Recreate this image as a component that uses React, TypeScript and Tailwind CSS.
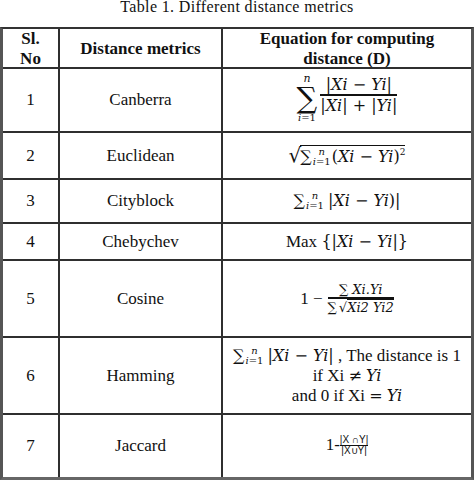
import React from "react";

const serif = "font-['Liberation_Serif','Times_New_Roman',serif]";
const mathF = "font-['DejaVu_Serif',serif]";

function V({ children }: { children: React.ReactNode }) {
  return <span className={`${mathF} italic`}>{children}</span>;
}

function Op({ children }: { children: React.ReactNode }) {
  return <span className={`${mathF} not-italic`}>{children}</span>;
}

function InlineSum() {
  return (
    <span className="inline-flex items-center">
      <span className={`${mathF} text-[16px] leading-none`}>∑</span>
      <span className={`${mathF} inline-flex flex-col text-[10px] leading-[10px] ml-[1px] italic`}>
        <span>n</span>
        <span>
          i<span className="not-italic">=1</span>
        </span>
      </span>
    </span>
  );
}

function XminusY({ close = "|", open = "|" }: { close?: string; open?: string }) {
  return (
    <span className="text-[16px]">
      <Op>{open}</Op>
      <V>Xi</V>
      <Op> − </Op>
      <V>Yi</V>
      <Op>{close}</Op>
    </span>
  );
}

const cell = `${serif} flex items-center justify-center text-center leading-[20px]`;

function Row({
  h,
  last,
  n,
  name,
  children,
  bold,
}: {
  h: string;
  last?: boolean;
  n: React.ReactNode;
  name: React.ReactNode;
  children: React.ReactNode;
  bold?: boolean;
}) {
  return (
    <div
      className={`grid grid-cols-[57px_163px_1fr] ${h} ${last ? "" : "border-b-2 border-[#2f2f2f]"} ${bold ? "font-bold" : ""}`}
    >
      <div className={`${cell} border-r-2 border-[#2f2f2f]`}>{n}</div>
      <div className={`${cell} border-r-2 border-[#2f2f2f]`}>{name}</div>
      <div className={cell}>{children}</div>
    </div>
  );
}

export default function App() {
  return (
    <div className={`w-[474px] h-[480px] bg-white text-[#111] ${serif} text-[17px] overflow-hidden`}>
      <div className="h-[27px] flex justify-center">
        <div className={`${serif} text-[16px] leading-[16px] tracking-[0.35px] -mt-[1px]`}>
          Table 1. Different distance metrics
        </div>
      </div>
      <div className="border-t-2 border-t-[#333] border-l-[3px] border-r-[3px] border-b-[3px] border-l-[#555] border-r-[#555] border-b-[#666]">
        <Row h="h-[40px]" bold n={<span>Sl.<br />No</span>} name="Distance metrics">
          <span>
            Equation for computing
            <br />
            distance (D)
          </span>
        </Row>
        <Row h="h-[64px]" n="1" name="Canberra">
          <div className="flex items-center -mt-[5px]">
            <div className="flex flex-col items-center mr-[3px]">
              <span className={`${mathF} italic text-[11px] leading-[11px]`}>n</span>
              <span className={`${mathF} text-[29px] leading-[28px]`}>∑</span>
              <span className={`${mathF} italic text-[10px] leading-[11px]`}>
                i<span className="not-italic">=1</span>
              </span>
            </div>
            <div className="flex flex-col items-center -mt-[5px]">
              <span className="leading-[19px]">
                <XminusY />
              </span>
              <span className="h-[1.5px] w-full bg-[#111]" />
              <span className="leading-[19px] text-[16px]">
                <Op>|</Op>
                <V>Xi</V>
                <Op>| + |</Op>
                <V>Yi</V>
                <Op>|</Op>
              </span>
            </div>
          </div>
        </Row>
        <Row h="h-[47px]" n="2" name="Euclidean">
          <div className="flex items-end -mt-[2px]">
            <span className={`${mathF} text-[20px] leading-[24px]`}>√</span>
            <span className="border-t-[1.5px] border-[#111] flex items-start pt-[1px] -ml-[1px]">
              <span className="flex items-center">
                <InlineSum />
                <span className="ml-[1px] text-[16px]">
                  <Op>(</Op>
                  <V>Xi</V>
                  <Op> − </Op>
                  <V>Yi</V>
                  <Op>)</Op>
                </span>
              </span>
              <span className={`${mathF} text-[9px] leading-[9px] mt-[1px]`}>2</span>
            </span>
          </div>
        </Row>
        <Row h="h-[44px]" n="3" name="Cityblock">
          <div className="flex items-center">
            <InlineSum />
            <span className="ml-[4px]">
              <XminusY close=")|" />
            </span>
          </div>
        </Row>
        <Row h="h-[37px]" n="4" name="Chebychev">
          <span>
            Max{" "}
            <span className="text-[16px]">
              <Op>{"{"}</Op>
            </span>
            <XminusY />
            <span className="text-[16px]">
              <Op>{"}"}</Op>
            </span>
          </span>
        </Row>
        <Row h="h-[77px]" n="5" name="Cosine">
          <div className="flex items-center">
            <span>1 − </span>
            <div className="flex flex-col items-center ml-[5px] text-[13px]">
              <span className="leading-[15px]">
                <Op>∑ </Op>
                <V>Xi.Yi</V>
              </span>
              <span className="h-[1.5px] w-full bg-[#111]" />
              <span className="leading-[15px] flex items-end">
                <Op>∑ </Op>
                <span className={`${mathF} ml-[2px]`}>√</span>
                <span className="border-t border-[#111]">
                  <V>Xi2 Yi2</V>
                </span>
              </span>
            </div>
          </div>
        </Row>
        <Row h="h-[77px]" n="6" name="Hamming">
          <div className="flex flex-col items-center">
            <span className="flex items-center">
              <InlineSum />
              <span className="ml-[4px]">
                <XminusY />
              </span>
              <span className="whitespace-pre"> , The distance is 1</span>
            </span>
            <span>
              if Xi{" "}
              <span className="text-[16px]">
                <Op>≠</Op> <V>Yi</V>
              </span>
            </span>
            <span>
              and 0 if Xi{" "}
              <span className="text-[16px]">
                <Op>=</Op> <V>Yi</V>
              </span>
            </span>
          </div>
        </Row>
        <Row h="h-[62px]" last n="7" name="Jaccard">
          <div className="flex items-center -mt-[2px]">
            <span>1-</span>
            <div className="flex flex-col items-center font-['Liberation_Sans',Arial,sans-serif] text-[10px] leading-[10px]">
              <span>|X ∩Y|</span>
              <span className="h-px w-full bg-[#111]" />
              <span>|X∪Y|</span>
            </div>
          </div>
        </Row>
      </div>
    </div>
  );
}
